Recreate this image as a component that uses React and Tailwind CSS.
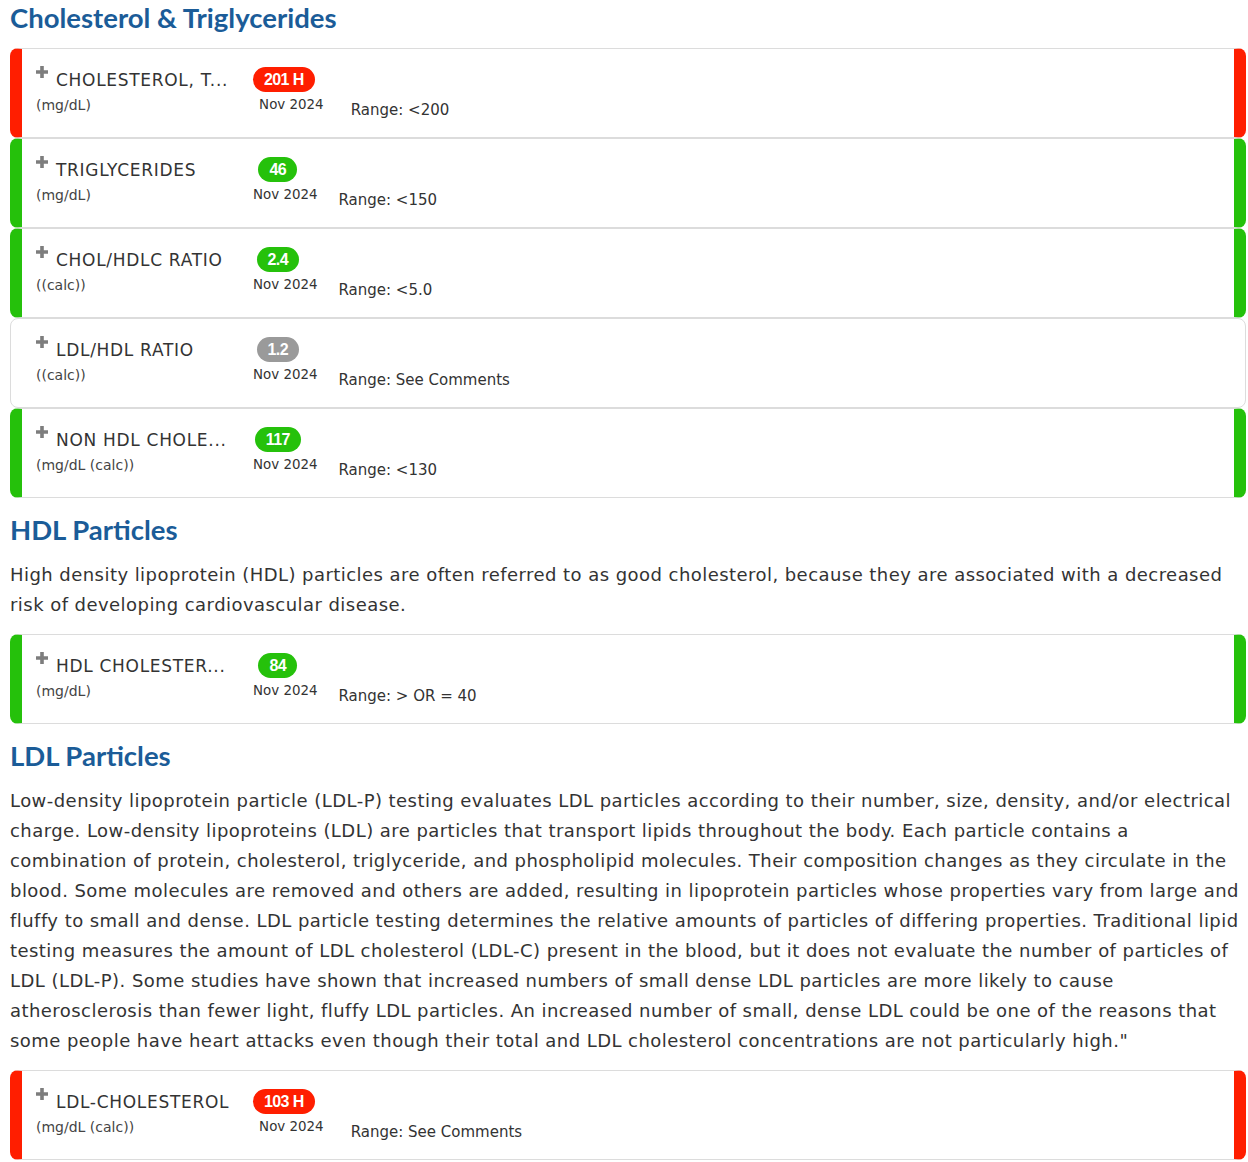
const RED = "red";
const GREEN = "green";
const GRAY = "gray";

const groups = [
  {
    title: "Cholesterol & Triglycerides",
    text: null,
    rows: [
      { name: "CHOLESTEROL, T...", unit: "(mg/dL)", value: "201 H", tone: RED, range: "<200" },
      { name: "TRIGLYCERIDES", unit: "(mg/dL)", value: "46", tone: GREEN, range: "<150" },
      { name: "CHOL/HDLC RATIO", unit: "((calc))", value: "2.4", tone: GREEN, range: "<5.0" },
      { name: "LDL/HDL RATIO", unit: "((calc))", value: "1.2", tone: GRAY, range: "See Comments" },
      { name: "NON HDL CHOLE...", unit: "(mg/dL (calc))", value: "117", tone: GREEN, range: "<130" },
    ],
  },
  {
    title: "HDL Particles",
    text: "High density lipoprotein (HDL) particles are often referred to as good cholesterol, because they are associated with a decreased risk of developing cardiovascular disease.",
    rows: [{ name: "HDL CHOLESTER...", unit: "(mg/dL)", value: "84", tone: GREEN, range: "> OR = 40" }],
  },
  {
    title: "LDL Particles",
    text: "Low-density lipoprotein particle (LDL-P) testing evaluates LDL particles according to their number, size, density, and/or electrical charge. Low-density lipoproteins (LDL) are particles that transport lipids throughout the body. Each particle contains a combination of protein, cholesterol, triglyceride, and phospholipid molecules. Their composition changes as they circulate in the blood. Some molecules are removed and others are added, resulting in lipoprotein particles whose properties vary from large and fluffy to small and dense. LDL particle testing determines the relative amounts of particles of differing properties. Traditional lipid testing measures the amount of LDL cholesterol (LDL-C) present in the blood, but it does not evaluate the number of particles of LDL (LDL-P). Some studies have shown that increased numbers of small dense LDL particles are more likely to cause atherosclerosis than fewer light, fluffy LDL particles. An increased number of small, dense LDL could be one of the reasons that some people have heart attacks even though their total and LDL cholesterol concentrations are not particularly high.\"",
    rows: [{ name: "LDL-CHOLESTEROL", unit: "(mg/dL (calc))", value: "103 H", tone: RED, range: "See Comments" }],
  },
];

function Plus() {
  return (
    <svg width="12" height="12" viewBox="0 0 12 12" className="shrink-0 mt-[1px] mr-[8px]">
      <path d="M6 0v12M0 6h12" stroke="#7d7d7d" strokeWidth="3.6" />
    </svg>
  );
}

function ResultCard({ row }) {
  const edge =
    row.tone === RED
      ? "border-l-[12px] border-r-[12px] border-l-[#ff1e00] border-r-[#ff1e00]"
      : row.tone === GREEN
      ? "border-l-[12px] border-r-[12px] border-l-[#25c10b] border-r-[#25c10b]"
      : "pl-[11px]";
  const badge =
    row.tone === RED ? "bg-[#ff1e00]" : row.tone === GREEN ? "bg-[#25c10b]" : "bg-[#9a9a9a]";

  return (
    <div className={`h-[90px] bg-white border border-[#dcdcdc] rounded-[8px] ${edge}`}>
      <div className="flex items-start pl-[14px] pt-[16px]">
        <div className="w-[217px] shrink-0">
          <div className="flex items-start h-[26px]">
            <Plus />
            <span className="mt-[2px] text-[17px] leading-[26px] tracking-[0.7px] text-[#333] whitespace-nowrap">
              {row.name}
            </span>
          </div>
          <div className="mt-[4px] text-[14px] leading-[20px] text-[#444]">{row.unit}</div>
        </div>
        <div className="flex flex-col items-center shrink-0">
          <span
            className={`mt-[2px] mr-[15px] h-[25px] px-[11px] rounded-full ${badge} text-white text-[16px] leading-[25px] font-bold tracking-[-0.6px] font-['Liberation_Sans',sans-serif]`}
          >
            {row.value}
          </span>
          <span className="mt-[3px] text-[13.4px] leading-[20px] text-[#333] whitespace-nowrap">Nov 2024</span>
        </div>
        <div className="ml-[21px] mt-[34px] text-[15px] leading-[22px] text-[#333] whitespace-nowrap">
          Range: {row.range}
        </div>
      </div>
    </div>
  );
}

export default function App() {
  return (
    <div className="bg-white w-[1248px] pl-[10px] pr-[2px] pb-[2px] font-['DejaVu_Sans',sans-serif] text-[#333]">
      {groups.map((g, gi) => (
        <section key={g.title}>
          <h2
            className={`font-['Lato',sans-serif] font-bold text-[27.5px] leading-[36px] text-[#1b5c98] ${
              gi === 0 ? "pt-0 pb-[12px]" : "pt-[14px] pb-[8px]"
            }`}
          >
            {g.title}
          </h2>
          {g.text && (
            <p className="text-[18px] leading-[30px] tracking-[0.45px] text-[#333] mt-[4px] mb-[14px]">{g.text}</p>
          )}
          <div className="flex flex-col">
            {g.rows.map((r) => (
              <ResultCard key={r.name} row={r} />
            ))}
          </div>
        </section>
      ))}
    </div>
  );
}
